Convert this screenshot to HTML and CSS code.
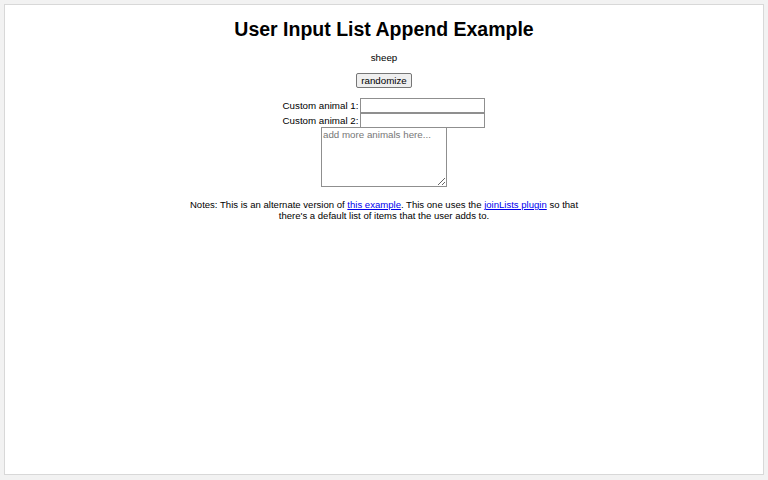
FILE: index.html
```html
<!DOCTYPE html>
<html>
<head>
<meta charset="utf-8">
<link rel="stylesheet" href="styles.css">
</head>
<body>
<div class="card">
  <h1 class="title">User Input List Append Example</h1>
  <p class="output">sheep</p>
  <button class="btn">randomize</button>
  <div class="form">
    <div class="row"><label>Custom animal 1:</label><input type="text" class="field"></div>
    <div class="row"><label>Custom animal 2:</label><input type="text" class="field"></div>
    <textarea class="more" placeholder="add more animals here..."></textarea>
  </div>
  <p class="notes">Notes: This is an alternate version of <a href="#">this example</a>. This one uses the <a href="#">joinLists plugin</a> so that there's a default list of items that the user adds to.</p>
</div>
</body>
</html>
```
FILE: styles.css
```css
html, body { margin: 0; padding: 0; }
body {
  background: #f2f2f2;
  padding: 4px 4px 5px 4px;
  font-family: "Liberation Sans", Arial, sans-serif;
  font-size: 9.75px;
  color: #000;
  box-sizing: border-box;
  height: 480px;
}
.card {
  background: #fff;
  border: 1px solid #d8d8d8;
  height: 471px;
  box-sizing: border-box;
  display: flex;
  flex-direction: column;
  align-items: center;
}
.title {
  font-size: 19.5px;
  font-weight: bold;
  margin: 13px 0 0 0;
  line-height: 23px;
}
.output {
  margin: 11px 0 0 0;
  line-height: 12px;
}
.btn {
  margin-top: 9px;
  font-family: "Liberation Sans", Arial, sans-serif;
  font-size: 9.75px;
  height: 15px;
  padding: 0 4px;
  line-height: 11px;
  border: 1px solid #767676;
  border-radius: 2px;
  background: #efefef;
  color: #000;
}
.form {
  margin-top: 10px;
  display: flex;
  flex-direction: column;
  align-items: center;
}
.row {
  display: flex;
  align-items: center;
  height: 15px;
}
.row label { margin-right: 2px; }
.field {
  width: 125px;
  height: 15px;
  box-sizing: border-box;
  border: 1px solid #8f8f8f;
  padding: 0 2px;
  margin: 0;
  font-size: 9.75px;
}
.more {
  width: 126px;
  height: 60px;
  box-sizing: border-box;
  margin: -1px 0 0 0;
  border: 1px solid #8f8f8f;
  padding: 1px;
  font-family: "Liberation Sans", Arial, sans-serif;
  font-size: 9.75px;
  resize: both;
}
.more::placeholder { color: #777; }
.notes {
  margin: 12px 0 0 0;
  max-width: 400px;
  font-size: 9.55px;
  text-align: center;
  line-height: 11px;
}
.notes a { color: #0000ee; }
```
